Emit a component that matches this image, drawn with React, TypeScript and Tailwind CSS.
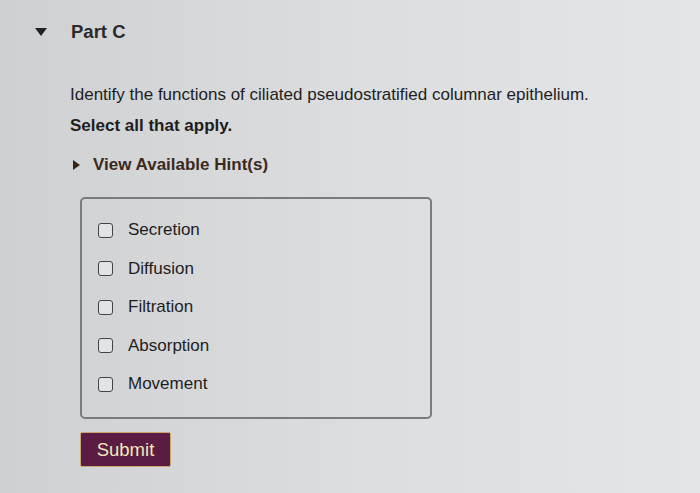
const options = ['Secretion', 'Diffusion', 'Filtration', 'Absorption', 'Movement'];

export default function App() {
  return (
    <main
      className="w-[700px] h-[493px] overflow-hidden bg-linear-to-r from-[#cfd0d2] via-[#dcdddf] to-[#e4e5e7] text-[#1e1e1e]"
      style={{ fontFamily: '"Liberation Sans", Arial, sans-serif' }}
    >
      <div className="flex items-center pt-[22px] pl-[35px]">
        <span className="w-0 h-0 border-l-[6px] border-r-[6px] border-t-[8px] border-l-transparent border-r-transparent border-t-[#222]" />
        <h2 className="ml-[24px] text-[18.5px] font-bold text-[#2a2a2a] leading-5">Part C</h2>
      </div>

      <div className="pl-[70px]">
        <p className="mt-[43px] text-[17px] leading-5">
          Identify the functions of ciliated pseudostratified columnar epithelium.
        </p>
        <p className="mt-[11px] text-[17px] font-bold leading-5">Select all that apply.</p>

        <div className="mt-[19px] ml-[3px] flex items-center">
          <span className="w-0 h-0 border-t-[5px] border-b-[5px] border-l-[7px] border-t-transparent border-b-transparent border-l-[#3a2418]" />
          <span className="ml-[13px] text-[17px] font-bold text-[#3b2a1c] leading-5">View Available Hint(s)</span>
        </div>

        <div className="mt-[22px] ml-[10px] w-[352px] h-[222px] rounded-[5px] border-2 border-[#7a7b7c] flex flex-col pt-[21px] pl-[16px] gap-[18.5px]">
          {options.map((o) => (
            <label key={o} className="flex items-center h-5">
              <span className="w-[15px] h-[15px] rounded-[3px] border-[1.5px] border-[#444] bg-[#e2e3e4]" />
              <span className="ml-[15px] text-[17px] text-[#1e1e1e]">{o}</span>
            </label>
          ))}
        </div>

        <button className="mt-[13px] ml-[10px] w-[91px] h-[35px] rounded-[2px] bg-[#5a1c42] text-[#f2e8b8] text-[18.5px] border border-[#c9a870]">
          Submit
        </button>
      </div>
    </main>
  );
}
